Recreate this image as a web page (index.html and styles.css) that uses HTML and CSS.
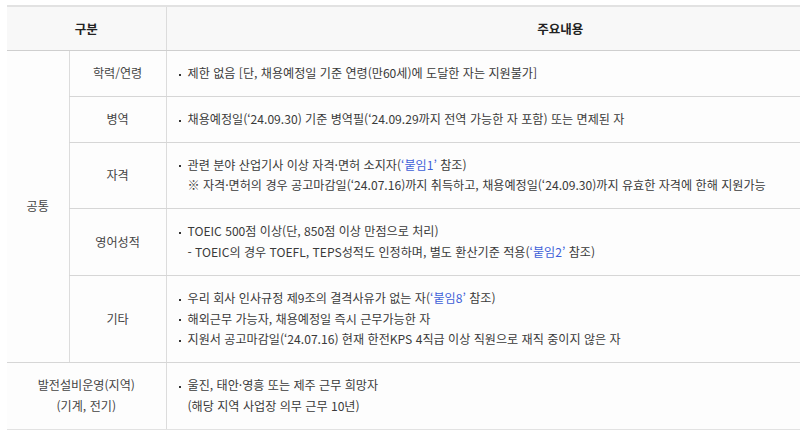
FILE: index.html
```html
<!DOCTYPE html>
<html lang="ko">
<head>
<meta charset="utf-8">
<title>지원자격</title>
<link rel="stylesheet" href="styles.css">
</head>
<body>
<table class="qual">
  <colgroup>
    <col class="c1">
    <col class="c2">
    <col class="c3">
  </colgroup>
  <thead>
    <tr>
      <th colspan="2">구분</th>
      <th>주요내용</th>
    </tr>
  </thead>
  <tbody>
    <tr>
      <td rowspan="5" class="grp">공통</td>
      <td class="sub">학력/연령</td>
      <td class="txt"><ul><li>제한 없음 [단, 채용예정일 기준 연령(만60세)에 도달한 자는 지원불가]</li></ul></td>
    </tr>
    <tr>
      <td class="sub">병역</td>
      <td class="txt"><ul><li>채용예정일(‘24.09.30) 기준 병역필(‘24.09.29까지 전역 가능한 자 포함) 또는 면제된 자</li></ul></td>
    </tr>
    <tr>
      <td class="sub">자격</td>
      <td class="txt"><ul><li>관련 분야 산업기사 이상 자격·면허 소지자(<span class="ref">‘붙임1’</span> 참조)<br>※ 자격·면허의 경우 공고마감일(‘24.07.16)까지 취득하고, 채용예정일(‘24.09.30)까지 유효한 자격에 한해 지원가능</li></ul></td>
    </tr>
    <tr>
      <td class="sub">영어성적</td>
      <td class="txt"><ul><li>TOEIC 500점 이상(단, 850점 이상 만점으로 처리)<br>- TOEIC의 경우 TOEFL, TEPS성적도 인정하며, 별도 환산기준 적용(<span class="ref">‘붙임2’</span> 참조)</li></ul></td>
    </tr>
    <tr>
      <td class="sub">기타</td>
      <td class="txt"><ul><li>우리 회사 인사규정 제9조의 결격사유가 없는 자(<span class="ref">‘붙임8’</span> 참조)</li><li>해외근무 가능자, 채용예정일 즉시 근무가능한 자</li><li>지원서 공고마감일(‘24.07.16) 현재 한전KPS 4직급 이상 직원으로 재직 중이지 않은 자</li></ul></td>
    </tr>
    <tr class="last">
      <td colspan="2" class="sub">발전설비운영(지역)<br>(기계, 전기)</td>
      <td class="txt"><ul><li>울진, 태안·영흥 또는 제주 근무 희망자<br>(해당 지역 사업장 의무 근무 10년)</li></ul></td>
    </tr>
  </tbody>
</table>
</body>
</html>
```

FILE: styles.css
```css
html, body {
  margin: 0;
  padding: 0;
  background: #ffffff;
  overflow: hidden;
}

body {
  padding: 5px 0 0 7px;
  font-family: "Noto Sans CJK KR", "Noto Sans", sans-serif;
  font-size: 12.1px;
  color: #3a3a3a;
}

.qual {
  width: 947px;
  border-collapse: collapse;
  table-layout: fixed;
  border-top: 2px solid #e2e2e2;
  border-bottom: 2px solid #e2e2e2;
}

.c1 { width: 62px; }
.c2 { width: 97px; }
.c3 { width: 788px; }

.qual th {
  height: 43px;
  padding: 0;
  background: #f8f8f8;
  font-weight: bold;
  font-size: 12.5px;
  color: #222;
  text-align: center;
  border-bottom: 1px solid #cfcfcf;
  border-left: 1px solid #dcdcdc;
}

.qual th:first-child { border-left: none; }

.qual td {
  padding: 12px 0;
  line-height: 20.8px;
  border-bottom: 1px solid #d6d6d6;
  border-left: 1px solid #dcdcdc;
  vertical-align: middle;
  background: #fdfdfd;
}

.qual td.grp {
  border-left: none;
  text-align: center;
  color: #444;
}

.qual td.sub {
  text-align: center;
  color: #444;
}

.qual tr.last td.sub { border-left: none; }

.qual tr.last td { border-bottom: none; }

.txt { padding-left: 12px !important; }

.txt ul {
  list-style: none;
  margin: 0;
  padding: 0 0 0 9px;
}

.txt li::before {
  content: "";
  display: inline-block;
  width: 2px;
  height: 2px;
  background: #333;
  margin-left: -9px;
  margin-right: 7px;
  vertical-align: middle;
}

.ref { color: #3d5fd8; }
```
